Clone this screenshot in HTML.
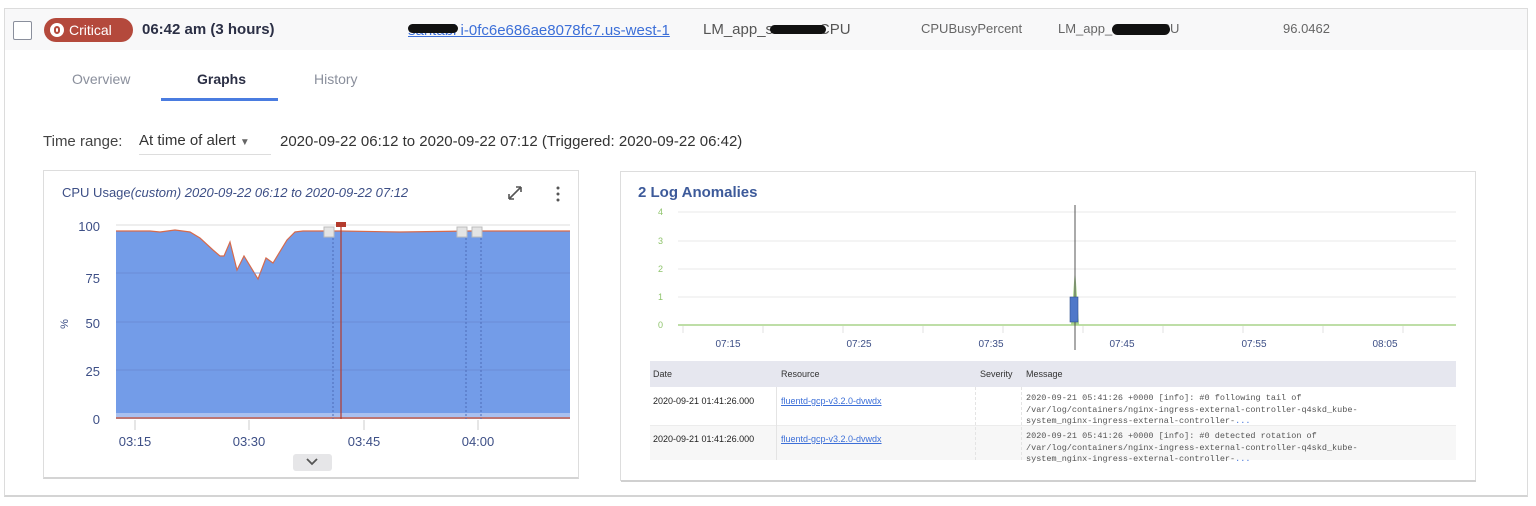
<!DOCTYPE html>
<html><head><meta charset="utf-8"><style>
*{margin:0;padding:0;box-sizing:border-box}
body{width:1536px;height:506px;background:#fff;font-family:"Liberation Sans",sans-serif;position:relative;overflow:hidden;color:#333}
.a{position:absolute;white-space:nowrap}
</style></head><body>
<div class="a" style="left:4px;top:8px;width:1524px;height:489px;border:1px solid #dcdcdc;border-bottom:2px solid #d4d4d4"></div>
<div class="a" style="left:5px;top:9px;width:1522px;height:41px;background:#f8f8f9"></div>
<div class="a" style="left:13px;top:21px;width:19px;height:19px;border:1.5px solid #8a8f9c;border-radius:2px;background:#fff"></div>
<div class="a" style="left:44px;top:18px;width:89px;height:24px;border-radius:12px;background:#b4493c"></div>
<div class="a" style="left:50px;top:23px;width:14px;height:14px;border-radius:7px;background:#fff"></div>
<div class="a" style="left:54px;top:26px;width:6px;height:8px;border:2px solid #b4493c;border-radius:4px"></div>
<div class="a" style="left:69px;top:22px;font-size:14px;color:#fff">Critical</div>
<div class="a" style="left:142px;top:21px;font-size:15px;font-weight:bold;color:#2b2f45">06:42 am (3 hours)</div>
<div class="a" style="left:408px;top:22px;font-size:15px;color:#3c6fd8;text-decoration:underline">santabl&nbsp;i-0fc6e686ae8078fc7.us-west-1</div>
<div class="a" style="left:408px;top:24px;width:50px;height:9px;background:#111;border-radius:5px"></div>
<div class="a" style="left:703px;top:21px;font-size:15px;color:#555">LM_app_sa&nbsp;&nbsp;&nbsp;&nbsp;&nbsp;&nbsp;&nbsp;&nbsp;&nbsp;CPU</div>
<div class="a" style="left:770px;top:25px;width:56px;height:9px;background:#111;border-radius:5px"></div>
<div class="a" style="left:921px;top:21px;font-size:13px;color:#666">CPUBusyPercent</div>
<div class="a" style="left:1058px;top:21px;font-size:13px;color:#666">LM_app_&nbsp;&nbsp;&nbsp;&nbsp;&nbsp;&nbsp;&nbsp;&nbsp;&nbsp;&nbsp;&nbsp;CPU</div>
<div class="a" style="left:1112px;top:24px;width:58px;height:11px;background:#111;border-radius:6px"></div>
<div class="a" style="left:1283px;top:21px;font-size:13px;color:#666">96.0462</div>
<div class="a" style="left:72px;top:71px;font-size:14px;color:#8a8f9c">Overview</div>
<div class="a" style="left:197px;top:71px;font-size:14px;color:#2b2f45;font-weight:bold">Graphs</div>
<div class="a" style="left:314px;top:71px;font-size:14px;color:#8a8f9c">History</div>
<div class="a" style="left:161px;top:98px;width:117px;height:3px;background:#4a7ce0"></div>
<div class="a" style="left:43px;top:133px;font-size:15px;color:#444">Time range:</div>
<div class="a" style="left:139px;top:132px;font-size:15px;color:#333">At time of alert <span style="font-size:10px;color:#666">▼</span></div>
<div class="a" style="left:139px;top:154px;width:132px;height:1px;background:#ddd"></div>
<div class="a" style="left:280px;top:133px;font-size:15px;color:#333">2020-09-22 06:12 to 2020-09-22 07:12 (Triggered: 2020-09-22 06:42)</div>

<div class="a" style="left:43px;top:170px;width:536px;height:309px;border:1px solid #ddd;border-bottom:2px solid #d4d4d4"></div>
<div class="a" style="left:62px;top:185px;font-size:13px;color:#3d4f86">CPU Usage<i>(custom) 2020-09-22 06:12 to 2020-09-22 07:12</i></div>
<svg class="a" style="left:0;top:0" width="1536" height="506">
<path d="M509 199 L521 187 M509 199 L509 194 M509 199 L514 199 M521 187 L516 187 M521 187 L521 192" stroke="#555" stroke-width="1.6" fill="none"/>
<circle cx="558" cy="188" r="1.5" fill="#555"/><circle cx="558" cy="194" r="1.5" fill="#555"/><circle cx="558" cy="200" r="1.5" fill="#555"/>
<g stroke="#ddd"><line x1="116" y1="225" x2="570" y2="225"/></g>
<path d="M116 231 L150 231 L160 232 L175 230 L190 232 L200 238 L213 250 L220 256 L224 256 L230 242 L237 270 L244 256 L258 279 L266 258 L273 263 L287 240 L295 232 L303 231 L340 231 L400 232 L470 231 L570 231 L570 419 L116 419 Z" fill="#739ce8"/>
<path d="M116 231 L150 231 L160 232 L175 230 L190 232 L200 238 L213 250 L220 256 L224 256 L230 242 L237 270 L244 256 L258 279 L266 258 L273 263 L287 240 L295 232 L303 231 L340 231 L400 232 L470 231 L570 231" fill="none" stroke="#d66a4c" stroke-width="1.2"/>
<g stroke="#6889d0" stroke-width="0.8"><line x1="116" y1="273" x2="570" y2="273"/><line x1="116" y1="322" x2="570" y2="322"/><line x1="116" y1="370" x2="570" y2="370"/></g>
<rect x="116" y="413" width="454" height="4" fill="#a9c0ef"/>
<line x1="116" y1="418" x2="570" y2="418" stroke="#d66a4c" stroke-width="1.5"/>
<g stroke="#4c6bb8" stroke-dasharray="2,2"><line x1="333" y1="230" x2="333" y2="419"/><line x1="466" y1="230" x2="466" y2="419"/><line x1="481" y1="230" x2="481" y2="419"/></g>
<g fill="#e4e4e4" stroke="#bbb"><rect x="324" y="227" width="10" height="10"/><rect x="457" y="227" width="10" height="10"/><rect x="472" y="227" width="10" height="10"/></g>
<line x1="341" y1="225" x2="341" y2="419" stroke="#b33a2c" stroke-width="1.2"/>
<rect x="336" y="222" width="10" height="5" fill="#b33a2c"/>
<g stroke="#ccc"><line x1="135" y1="420" x2="135" y2="430"/><line x1="249" y1="420" x2="249" y2="430"/><line x1="364" y1="420" x2="364" y2="430"/><line x1="478" y1="420" x2="478" y2="430"/></g>
<g font-family="Liberation Sans" font-size="13" fill="#3d4f86" text-anchor="end"><text x="100" y="231">100</text><text x="100" y="283">75</text><text x="100" y="328">50</text><text x="100" y="376">25</text><text x="100" y="424">0</text></g>
<text x="68" y="324" font-family="Liberation Sans" font-size="11" fill="#3d4f86" transform="rotate(-90 68 324)" text-anchor="middle">%</text>
<g font-family="Liberation Sans" font-size="13" fill="#3d4f86" text-anchor="middle"><text x="135" y="446">03:15</text><text x="249" y="446">03:30</text><text x="364" y="446">03:45</text><text x="478" y="446">04:00</text></g>
<rect x="293" y="454" width="39" height="17" rx="3" fill="#e6e6e8"/>
<path d="M307 459 L312 464 L317 459" stroke="#555" stroke-width="1.8" fill="none"/>

<rect x="620.5" y="171.5" width="855" height="309" fill="none" stroke="#ddd"/>
<line x1="621" y1="481" x2="1476" y2="481" stroke="#d0d0d0" stroke-width="2"/>
<g stroke="#e8e8e8"><line x1="678" y1="212" x2="1456" y2="212"/><line x1="678" y1="241" x2="1456" y2="241"/><line x1="678" y1="269" x2="1456" y2="269"/><line x1="678" y1="297" x2="1456" y2="297"/></g>
<line x1="678" y1="325" x2="1456" y2="325" stroke="#a8d48a" stroke-width="1.5"/>
<path d="M1071 325 L1075 268 L1079 325 Z" fill="#a8d48a"/>
<g stroke="#e0e0e0"><line x1="683" y1="326" x2="683" y2="333"/><line x1="763" y1="326" x2="763" y2="333"/><line x1="843" y1="326" x2="843" y2="333"/><line x1="923" y1="326" x2="923" y2="333"/><line x1="1003" y1="326" x2="1003" y2="333"/><line x1="1083" y1="326" x2="1083" y2="333"/><line x1="1163" y1="326" x2="1163" y2="333"/><line x1="1243" y1="326" x2="1243" y2="333"/><line x1="1323" y1="326" x2="1323" y2="333"/><line x1="1403" y1="326" x2="1403" y2="333"/></g>
<line x1="1075" y1="205" x2="1075" y2="350" stroke="#555"/>
<rect x="1070" y="297" width="8" height="25" fill="#4f78c9" stroke="#2f4f8f" stroke-width="0.6"/>
<g font-family="Liberation Sans" font-size="9" fill="#8fc46c" text-anchor="end"><text x="663" y="215">4</text><text x="663" y="244">3</text><text x="663" y="272">2</text><text x="663" y="300">1</text><text x="663" y="328">0</text></g>
<g font-family="Liberation Sans" font-size="10" fill="#3d4f86" text-anchor="middle"><text x="728" y="347">07:15</text><text x="859" y="347">07:25</text><text x="991" y="347">07:35</text><text x="1122" y="347">07:45</text><text x="1254" y="347">07:55</text><text x="1385" y="347">08:05</text></g>
</svg>
<div class="a" style="left:638px;top:184px;font-size:15px;font-weight:bold;color:#3d5a9a">2 Log Anomalies</div>
<div class="a" style="left:650px;top:361px;width:806px;height:26px;background:#e6e7ef"></div>
<div class="a" style="left:650px;top:426px;width:806px;height:34px;background:#f7f7f7"></div>
<div class="a" style="left:650px;top:425px;width:806px;height:1px;background:#ececec"></div>
<div class="a" style="left:776px;top:387px;width:1px;height:73px;background:#e4e4e4"></div>
<div class="a" style="left:975px;top:387px;width:1px;height:73px;border-left:1px dashed #e4e4e4"></div>
<div class="a" style="left:1021px;top:387px;width:1px;height:73px;border-left:1px dashed #e4e4e4"></div>
<div class="a" style="left:653px;top:369px;font-size:9px;color:#333">Date</div>
<div class="a" style="left:781px;top:369px;font-size:9px;color:#333">Resource</div>
<div class="a" style="left:980px;top:369px;font-size:9px;color:#333">Severity</div>
<div class="a" style="left:1026px;top:369px;font-size:9px;color:#333">Message</div>
<div class="a" style="left:653px;top:396px;font-size:9px;color:#222">2020-09-21 01:41:26.000</div>
<div class="a" style="left:781px;top:396px;font-size:9px;color:#3c6fd8;text-decoration:underline">fluentd-gcp-v3.2.0-dvwdx</div>
<div class="a" style="left:1026px;top:393px;font-family:'Liberation Mono',monospace;font-size:8.5px;line-height:11.5px;color:#555;white-space:pre">2020-09-21 05:41:26 +0000 [info]: #0 following tail of
/var/log/containers/nginx-ingress-external-controller-q4skd_kube-
system_nginx-ingress-external-controller-<span style="color:#3c6fd8">...</span></div>
<div class="a" style="left:653px;top:434px;font-size:9px;color:#222">2020-09-21 01:41:26.000</div>
<div class="a" style="left:781px;top:434px;font-size:9px;color:#3c6fd8;text-decoration:underline">fluentd-gcp-v3.2.0-dvwdx</div>
<div class="a" style="left:1026px;top:431px;font-family:'Liberation Mono',monospace;font-size:8.5px;line-height:11.5px;color:#555;white-space:pre">2020-09-21 05:41:26 +0000 [info]: #0 detected rotation of
/var/log/containers/nginx-ingress-external-controller-q4skd_kube-
system_nginx-ingress-external-controller-<span style="color:#3c6fd8">...</span></div>
</body></html>
